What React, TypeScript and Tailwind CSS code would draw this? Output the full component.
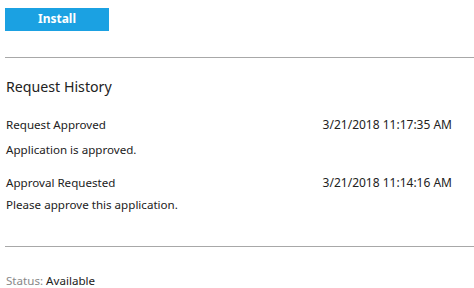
export default function App() {
  return (
    <div className="w-[474px] h-[288px] bg-white text-[#222] overflow-hidden" style={{ fontFamily: '"Segoe UI", "Noto Sans", sans-serif' }}>
      <div className="pl-[5px] pt-[5px]">
        <button className="w-[104px] h-[23px] bg-[#1ba1e2] text-white text-[12px] font-bold">Install</button>
      </div>
      <div className="ml-[5px] mt-[26px] h-px bg-[#a8a8a8]" />
      <div className="pl-[6px]">
        <div className="mt-[19px] text-[14.2px] leading-[20px]">Request History</div>
        <div className="mt-[20px] flex justify-between pr-[22px] text-[11.6px] leading-[16px]">
          <span>Request Approved</span>
          <span className="text-[12px]">3/21/2018 11:17:35 AM</span>
        </div>
        <div className="mt-[9px] text-[11.6px] leading-[16px]">Application is approved.</div>
        <div className="mt-[17px] flex justify-between pr-[22px] text-[11.6px] leading-[16px]">
          <span>Approval Requested</span>
          <span className="text-[12px]">3/21/2018 11:14:16 AM</span>
        </div>
        <div className="mt-[6px] text-[11.6px] leading-[16px]">Please approve this application.</div>
      </div>
      <div className="ml-[5px] mt-[33px] h-px bg-[#a8a8a8]" />
      <div className="pl-[6px] mt-[26px] text-[11.6px] leading-[16px]">
        <span className="text-[#888]">Status: </span>
        <span>Available</span>
      </div>
    </div>
  );
}
